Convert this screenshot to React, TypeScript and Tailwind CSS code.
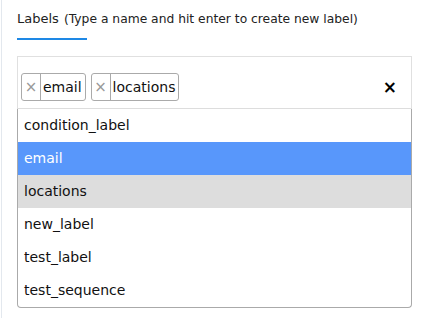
const font = { fontFamily: '"DejaVu Sans", sans-serif' };

const selected = ["email", "locations"];
const options = ["condition_label", "email", "locations", "new_label", "test_label", "test_sequence"];

export default function App() {
  return (
    <div className="h-[318px] w-[425px] bg-white text-[#111]" style={font}>
      <div className="ml-[1px] h-full border-l border-[#e3e8ee] pl-[15px] pr-[13px]">
        <div className="pt-[9px]">
          <div className="h-[18px] whitespace-nowrap leading-[18px]">
            <span className="text-[13px] text-[#222]">Labels</span>{" "}
            <span className="text-[12.3px] text-[#222]">(Type a name and hit enter to create new label)</span>
          </div>
          <div className="mt-[11px] h-[2px] w-[70px] bg-[#1e88e5]" />
        </div>

        <div className="mt-[16px] w-[395px]">
          <div className="flex h-[53px] items-end border border-[#e0e0e0] border-b-[#ddd] bg-white pb-[7px] pl-[3px] pr-[14px]">
            <div className="flex flex-1 gap-[5px]">
              {selected.map((s) => (
                <div key={s} className="flex h-[28px] items-stretch rounded-[3px] border border-[#aaa] bg-white">
                  <span className="flex w-[19px] items-center justify-center border-r border-[#aaa] text-[15px] text-[#999]">×</span>
                  <span className="flex items-center pl-[2px] pr-[3px] text-[14px] text-[#111]">{s}</span>
                </div>
              ))}
            </div>
            <span className="mb-[5px] text-[17px] font-bold leading-none text-black">×</span>
          </div>
          <ul className="rounded-b-[4px] border border-t-0 border-[#aaa] bg-white">
            {options.map((o) => (
              <li
                key={o}
                className={
                  "flex h-[33px] items-center pl-[6px] text-[14px] " +
                  (o === "email"
                    ? "bg-[#5897fb] text-white"
                    : o === "locations"
                      ? "bg-[#ddd] text-[#111]"
                      : "text-[#111]")
                }
              >
                {o}
              </li>
            ))}
          </ul>
        </div>
      </div>
    </div>
  );
}
